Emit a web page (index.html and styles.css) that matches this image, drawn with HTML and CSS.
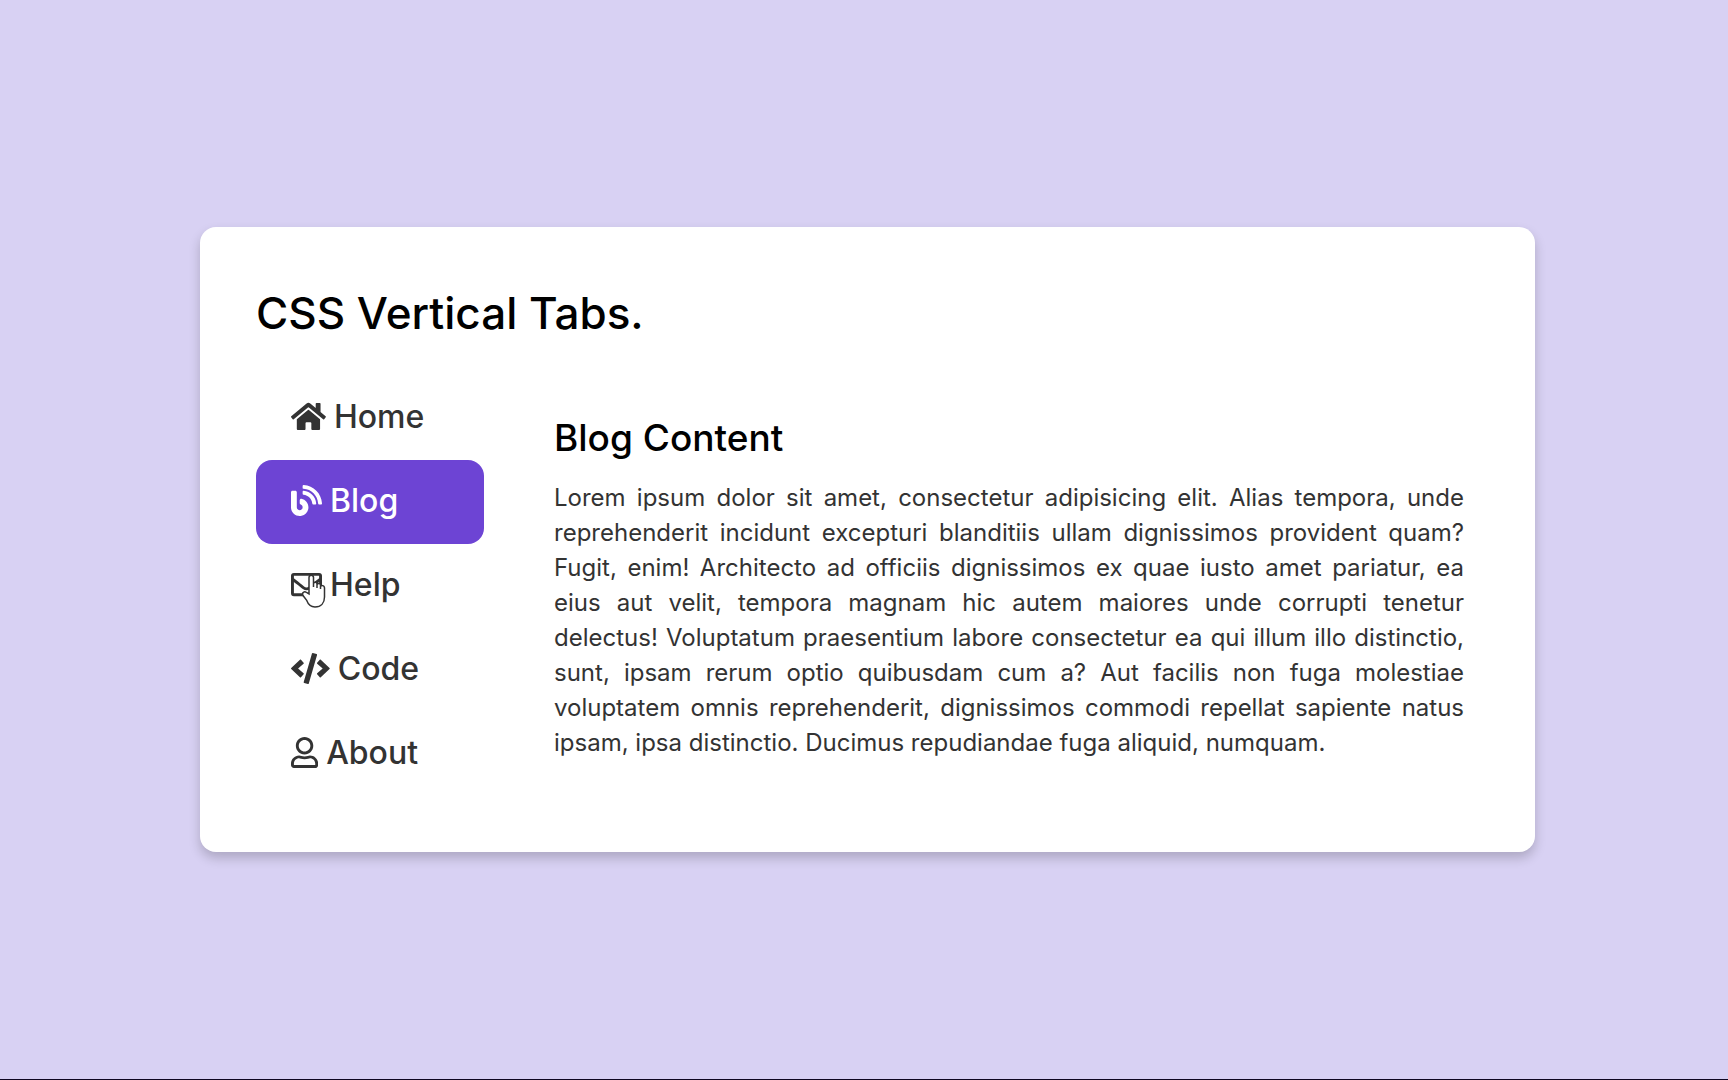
FILE: index.html
```html
<!DOCTYPE html>
<html lang="en">
<head>
    <meta charset="UTF-8">
    <meta name="viewport" content="width=device-width, initial-scale=1.0">
    <title>CSS Vertical Tabs</title>
    <link rel="stylesheet" href="styles.css">
</head>
<body>
    <main class="container">
        <h1 class="topic">CSS Vertical Tabs.</h1>
        <div class="content">
            <nav class="list">
                <button type="button" class="tab">
                    <svg class="icon" viewBox="0 0 576 512" aria-hidden="true"><path d="M280.37 148.26L96 300.11V464a16 16 0 0 0 16 16l112.06-.29a16 16 0 0 0 15.92-16V368a16 16 0 0 1 16-16h64a16 16 0 0 1 16 16v95.64a16 16 0 0 0 16 16.05L464 480a16 16 0 0 0 16-16V300L295.67 148.26a12.19 12.19 0 0 0-15.3 0zM571.6 251.47L488 182.56V44.05a12 12 0 0 0-12-12h-56a12 12 0 0 0-12 12v72.61L318.47 43a48 48 0 0 0-61 0L4.34 251.47a12 12 0 0 0-1.6 16.9l25.5 31A12 12 0 0 0 45.15 301l235.22-193.74a12.19 12.19 0 0 1 15.3 0L530.9 301a12 12 0 0 0 16.9-1.6l25.5-31a12 12 0 0 0-1.7-16.93z"/></svg>
                    <span>Home</span>
                </button>
                <button type="button" class="tab active" aria-current="true">
                    <svg class="icon" viewBox="0 0 512 512" aria-hidden="true"><path d="M172.2 226.8c-14.6-2.9-28.2 8.9-28.2 23.8V301c0 10.2 7.1 18.4 16.7 22 18.2 6.8 31.3 24.4 31.3 45 0 26.5-21.5 48-48 48s-48-21.5-48-48V120c0-13.3-10.7-24-24-24H24c-13.3 0-24 10.7-24 24v248c0 89.5 82.1 160.2 175 140.7 54.4-11.4 98.3-55.4 109.7-109.7 17.4-82.9-37-157.2-112.5-172.2zM209 0c-9.2-.5-17 6.8-17 16v31.6c0 8.5 6.6 15.5 15 15.9 129.4 7 233.4 112 240.9 241.5.5 8.4 7.5 15 15.9 15h32.1c9.2 0 16.5-7.8 16-17C503.4 139.8 372.2 8.6 209 0zm.3 96c-9.3-.7-17.3 6.7-17.3 16.1v32.1c0 8.4 6.5 15.3 14.8 15.9 76.8 6.3 138 68.2 144.9 145.2.8 8.3 7.6 14.7 15.9 14.7h32.2c9.3 0 16.8-8 16.1-17.3-8.4-110.2-96.5-198.2-206.6-206.7z"/></svg>
                    <span>Blog</span>
                </button>
                <button type="button" class="tab">
                    <svg class="icon" viewBox="0 0 512 512" aria-hidden="true"><path d="M48 64h416a48 48 0 0 1 48 48v288a48 48 0 0 1-48 48H48a48 48 0 0 1-48-48V112a48 48 0 0 1 48-48zm0 48v41c22 18 58 46 134 106 17 13 50 46 74 45 24 1 57-32 74-45 76-60 112-88 134-106v-41H48zm0 288h416V214c-23 18-55 43-105 82-22 17-60 56-103 56-43 0-82-39-103-56-50-39-82-64-105-82v186z"/></svg>
                    <span>Help</span>
                    <svg class="pointer" viewBox="0 0 24 34" aria-hidden="true"><path d="M7 20V3.500C7 .5 11.500 .5 11.500 3.500V13V10C11.500 7.500 15 7.500 15 10V14V11C15 9 18.500 9 18.500 11V15V13C18.500 11 22.500 11 22.500 14V23C22.500 29 19 33 13 33C8 33 6 30 4.500 26L1 21.500C-.5 18.500 2.500 17 4.500 18.500Z"/></svg>
                </button>
                <button type="button" class="tab">
                    <svg class="icon" viewBox="0 0 640 512" aria-hidden="true"><path d="M278.9 511.5l-61-17.7c-6.4-1.8-10-8.5-8.2-14.9L346.2 8.7c1.8-6.4 8.5-10 14.9-8.2l61 17.7c6.4 1.8 10 8.5 8.2 14.9L293.8 503.3c-1.9 6.4-8.5 10.1-14.9 8.2zm-114-112.2l43.5-46.4c4.6-4.9 4.3-12.7-.8-17.2L117 256l90.6-79.7c5.1-4.5 5.5-12.3.8-17.2l-43.5-46.4c-4.5-4.8-12.1-5.1-17-.5L3.8 247.2c-5.1 4.7-5.1 12.8 0 17.5l144.1 135.1c4.9 4.6 12.5 4.4 17-.5zm327.2.6l144.1-135.1c5.1-4.7 5.1-12.8 0-17.5L492.1 112.1c-4.8-4.5-12.4-4.3-17 .5L431.6 159c-4.6 4.9-4.3 12.7.8 17.2L523 256l-90.6 79.7c-5.1 4.5-5.5 12.3-.8 17.2l43.5 46.4c4.5 4.9 12.1 5.1 17 .6z"/></svg>
                    <span>Code</span>
                </button>
                <button type="button" class="tab">
                    <svg class="icon" viewBox="0 0 448 512" aria-hidden="true"><path d="M313.6 304c-28.7 0-42.5 16-89.6 16-47.1 0-60.8-16-89.6-16C60.2 304 0 364.2 0 438.4V464c0 26.500 21.500 48 48 48h352c26.500 0 48-21.500 48-48v-25.600c0-74.200-60.200-134.400-134.400-134.400zM400 464H48v-25.600c0-47.600 38.800-86.400 86.400-86.400 14.600 0 38.300 16 89.600 16 51.700 0 74.900-16 89.600-16 47.600 0 86.400 38.800 86.400 86.400V464zM224 288c79.500 0 144-64.500 144-144S303.500 0 224 0 80 64.500 80 144s64.500 144 144 144zm0-240c52.900 0 96 43.100 96 96s-43.100 96-96 96-96-43.100-96-96 43.100-96 96-96z"/></svg>
                    <span>About</span>
                </button>
            </nav>
            <section class="text-content">
                <h2 class="title">Blog Content</h2>
                <p>Lorem ipsum dolor sit amet, consectetur adipisicing elit. Alias tempora, unde reprehenderit incidunt excepturi blanditiis ullam dignissimos provident quam? Fugit, enim! Architecto ad officiis dignissimos ex quae iusto amet pariatur, ea eius aut velit, tempora magnam hic autem maiores unde corrupti tenetur delectus! Voluptatum praesentium labore consectetur ea qui illum illo distinctio, sunt, ipsam rerum optio quibusdam cum a? Aut facilis non fuga molestiae voluptatem omnis reprehenderit, dignissimos commodi repellat sapiente natus ipsam, ipsa distinctio. Ducimus repudiandae fuga aliquid, numquam.</p>
            </section>
        </div>
    </main>
</body>
</html>
```
FILE: styles.css
```css
* { margin: 0; padding: 0; box-sizing: border-box; font-family: Inter, sans-serif; }
body { display: flex; align-items: center; min-height: 100vh; padding: 0 193px 0 200px; background: #d8d1f3; border-bottom: 1px solid #0e0620; }
.container { width: 100%; padding: 56px; background: #fff; border-radius: 16px; box-shadow: 0 6px 12px rgba(0, 0, 0, 0.2); }
.topic { margin-bottom: 32px; font-size: 44px; line-height: 61px; font-weight: 500; }
.content { display: flex; align-items: center; }
.list { width: 228px; flex-shrink: 0; }
.tab { position: relative; display: flex; align-items: center; gap: 8px; width: 100%; height: 84px; padding: 0 35px 4px; border: none; border-radius: 16px; background: none; color: #333; font-size: 32px; font-weight: 500; cursor: pointer; }
.tab.active { background: #6d44d4; color: #fff; }
.icon { height: 31px; flex-shrink: 0; fill: currentColor; }
.pointer { position: absolute; left: 46px; top: 30px; width: 24px; height: 34px; fill: #fff; stroke: #333; stroke-width: 1.5; }
.text-content { flex: 1; padding: 0 15px 0 70px; }
.title { margin-bottom: 18px; font-size: 37px; line-height: 49px; font-weight: 500; }
.text-content p { font-size: 24px; line-height: 35px; font-weight: 400; color: #333; text-align: justify; }
```
